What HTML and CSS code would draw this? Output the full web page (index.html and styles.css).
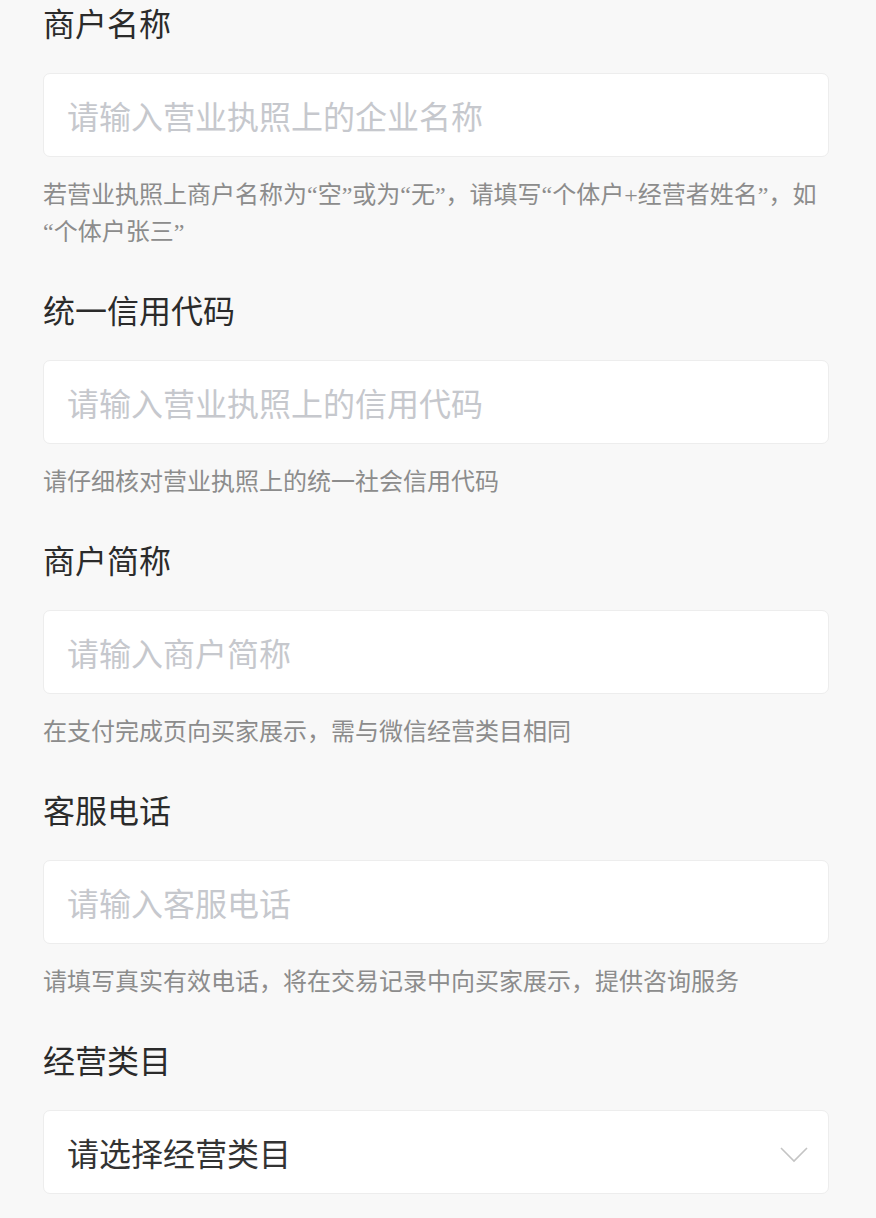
FILE: index.html
```html
<!DOCTYPE html>
<html lang="zh-CN">
<head>
  <meta charset="UTF-8">
  <title>商户信息</title>
  <link rel="stylesheet" href="styles.css">
</head>
<body>
  <div class="form">
    <div class="group">
      <div class="label">商户名称</div>
      <input class="field" type="text" placeholder="请输入营业执照上的企业名称">
      <div class="hint">若营业执照上商户名称为“空”或为“无”，请填写“个体户+经营者姓名”，如“个体户张三”</div>
    </div>

    <div class="group">
      <div class="label">统一信用代码</div>
      <input class="field" type="text" placeholder="请输入营业执照上的信用代码">
      <div class="hint">请仔细核对营业执照上的统一社会信用代码</div>
    </div>

    <div class="group">
      <div class="label">商户简称</div>
      <input class="field" type="text" placeholder="请输入商户简称">
      <div class="hint">在支付完成页向买家展示，需与微信经营类目相同</div>
    </div>

    <div class="group">
      <div class="label">客服电话</div>
      <input class="field" type="text" placeholder="请输入客服电话">
      <div class="hint">请填写真实有效电话，将在交易记录中向买家展示，提供咨询服务</div>
    </div>

    <div class="group">
      <div class="label">经营类目</div>
      <div class="field select">
        <span>请选择经营类目</span>
        <svg class="arrow" width="28" height="16" viewBox="0 0 28 16">
          <path d="M1 1 L14 14 L27 1" fill="none" stroke="#c4c4c4" stroke-width="1.6"/>
        </svg>
      </div>
    </div>
  </div>
</body>
</html>
```

FILE: styles.css
```css
body {
  margin: 0;
  background: #f8f8f8;
  font-family: "Noto Sans CJK SC", "Noto Sans", sans-serif;
  color: #333;
}

.form {
  padding: 2px 47px 0 43px;
}

.group {
  margin-bottom: 38px;
}

.label {
  font-size: 32px;
  line-height: 40px;
  color: #2b2b2b;
}

.field {
  display: block;
  box-sizing: border-box;
  width: 100%;
  height: 84px;
  margin-top: 31px;
  padding: 0 23px;
  background: #fff;
  border: 1px solid #ededed;
  border-radius: 7px;
  font-family: inherit;
  font-size: 32px;
  color: #333;
  outline: none;
}

.field::placeholder {
  color: #c6c8cd;
}

.select {
  display: flex;
  align-items: center;
  justify-content: space-between;
  padding-right: 20px;
}

.arrow {
  margin-top: 6px;
}

/* quotes and "+" come from the serif font, like in the app */
.hint {
  margin-top: 20px;
  font-family: "Liberation Serif", "Noto Sans CJK SC", serif;
  font-size: 24px;
  line-height: 37px;
  color: #8c8c8c;
}
```
